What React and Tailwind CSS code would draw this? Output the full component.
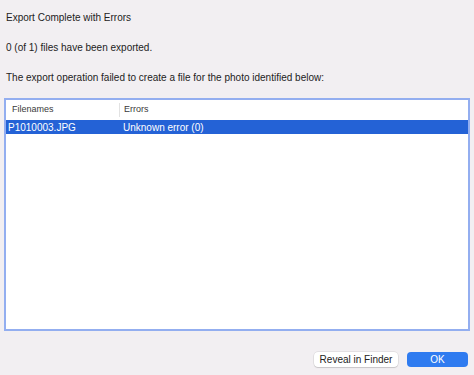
import React from 'react';

function App() {
  return (
    <div className="w-[474px] h-[375px] bg-[#f2eff2] text-[#222222] flex flex-col" style={{ fontFamily: '"Liberation Sans", Arial, sans-serif' }}>
      <div className="flex flex-col px-[6px] pt-[11px] text-[10px] leading-[13px]">
        <p>Export Complete with Errors</p>
        <p className="mt-[17px]">0 (of 1) files have been exported.</p>
        <p className="mt-[17px]">The export operation failed to create a file for the photo identified below:</p>
      </div>

      {/* Table */}
      <div className="mx-[4px] mt-[14px] w-[466px] h-[233px] border-2 border-[#93aef0] bg-white">
        <div className="flex h-[20px] items-center text-[9px] text-[#3a3a3a]">
          <div className="w-[114px] pl-[6px] border-r border-[#e2e2e2] h-[14px] flex items-center">Filenames</div>
          <div className="pl-[4px]">Errors</div>
        </div>
        <div className="flex h-[14px] items-center bg-[#2462d6] text-white text-[10px]">
          <div className="w-[115px] pl-[2px]">P1010003.JPG</div>
          <div className="pl-[2px]">Unknown error (0)</div>
        </div>
      </div>

      {/* Buttons */}
      <div className="flex justify-end gap-[9px] pr-[6px] mt-[21px] text-[10px]">
        <button className="w-[84px] h-[15px] rounded-[4px] bg-white text-[#222222] shadow-[0_0_0_0.5px_rgba(0,0,0,0.12),0_1px_1px_rgba(0,0,0,0.12)]">Reveal in Finder</button>
        <button className="w-[61px] h-[15px] rounded-[4px] bg-[#2f7bf0] text-white">OK</button>
      </div>
    </div>
  );
}

export default App;
